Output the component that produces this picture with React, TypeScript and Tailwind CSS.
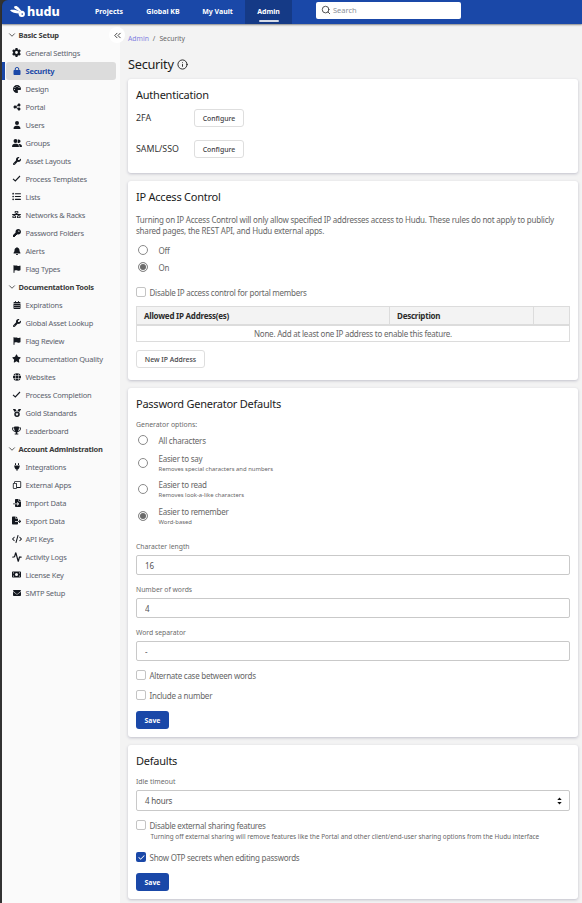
import type { ReactNode } from 'react'
import {
  FaGear, FaLock, FaPalette, FaShareNodes, FaUser, FaUserGroup, FaWrench, FaCheck, FaListUl,
  FaKey, FaBell, FaFlag, FaCalendarDays, FaStar, FaGlobe, FaMedal, FaTrophy, FaPlug, FaNetworkWired,
  FaFileImport, FaFileExport, FaCode, FaMoneyBill, FaEnvelope,
} from 'react-icons/fa6'
import { BiDevices } from 'react-icons/bi'
import { Activity, ChevronDown, ChevronsLeft, Info, Search } from 'lucide-react'
import type { IconType } from 'react-icons'

type NavItem = { label: string; icon: IconType; active?: boolean; size?: number }

function PulseIcon({ size, className }: { size?: string | number; className?: string }) {
  return <Activity size={size} strokeWidth={3} className={className} />
}

function CheckIcon({ size, className }: { size?: string | number; className?: string }) {
  return (
    <svg width={size} height={size} viewBox="0 0 9 9" fill="none" stroke="currentColor" strokeWidth="1.1" className={className}>
      <path d="M1 4.800 3.300 7 8 2" />
    </svg>
  )
}

const sections: { title: string; items: NavItem[] }[] = [
  {
    title: 'Basic Setup',
    items: [
      { label: 'General Settings', icon: FaGear },
      { label: 'Security', icon: FaLock, active: true, size: 8 },
      { label: 'Design', icon: FaPalette, size: 8 },
      { label: 'Portal', icon: FaShareNodes, size: 8 },
      { label: 'Users', icon: FaUser, size: 8 },
      { label: 'Groups', icon: FaUserGroup, size: 10 },
      { label: 'Asset Layouts', icon: FaWrench, size: 8 },
      { label: 'Process Templates', icon: CheckIcon },
      { label: 'Lists', icon: FaListUl },
      { label: 'Networks & Racks', icon: FaNetworkWired },
      { label: 'Password Folders', icon: FaKey, size: 8 },
      { label: 'Alerts', icon: FaBell, size: 8 },
      { label: 'Flag Types', icon: FaFlag, size: 8 },
    ],
  },
  {
    title: 'Documentation Tools',
    items: [
      { label: 'Expirations', icon: FaCalendarDays, size: 8 },
      { label: 'Global Asset Lookup', icon: FaWrench, size: 8 },
      { label: 'Flag Review', icon: FaFlag, size: 8 },
      { label: 'Documentation Quality', icon: FaStar },
      { label: 'Websites', icon: FaGlobe, size: 8 },
      { label: 'Process Completion', icon: CheckIcon },
      { label: 'Gold Standards', icon: FaMedal, size: 8 },
      { label: 'Leaderboard', icon: FaTrophy },
    ],
  },
  {
    title: 'Account Administration',
    items: [
      { label: 'Integrations', icon: FaPlug, size: 8 },
      { label: 'External Apps', icon: BiDevices, size: 10 },
      { label: 'Import Data', icon: FaFileImport, size: 8 },
      { label: 'Export Data', icon: FaFileExport },
      { label: 'API Keys', icon: FaCode, size: 10 },
      { label: 'Activity Logs', icon: PulseIcon, size: 10 },
      { label: 'License Key', icon: FaMoneyBill },
      { label: 'SMTP Setup', icon: FaEnvelope, size: 8 },
    ],
  },
]

function Logo() {
  return (
    <div className="flex w-[78px] items-center pl-2">
      <svg width="16" height="14" viewBox="0 0 16 14" fill="white">
        <path d="M4 1.700C5.200.6 7.300.8 8.600 2.600L11.500 6 9.600 6.600C7.500 4.400 4 4.200 4 1.700Z" />
        <path d="M0 5.200C2.500 4.400 6.500 5 10 6.600L8.800 8.400C5.500 8.300 1.800 7.500 0 5.200Z" />
        <path d="M12.100 5.700a3.200 3.200 0 1 1-3.500 3.800c-.3-2 1.300-3.800 3.500-3.800Zm.1 2.600a.8.800 0 1 0 0 1.600.8.800 0 0 0 0-1.600Z" />
      </svg>
      <span className="ml-[1px] text-[12.5px] leading-none font-extrabold text-white">hudu</span>
    </div>
  )
}

function Header() {
  return (
    <header className="relative z-10 flex h-6 items-stretch rounded-tl-md bg-[#1a48a8] font-bold text-white shadow-[0_1px_2px_rgba(0,0,0,0.45)]">
      <Logo />
      <nav className="flex text-[7px]">
        <a className="flex w-[58px] items-center justify-center">Projects</a>
        <a className="flex w-[50px] items-center justify-center">Global KB</a>
        <a className="flex w-[59px] items-center justify-center">My Vault</a>
        <a className="relative -ml-[2px] flex w-[47px] items-center justify-center bg-[#153a86]">
          Admin
          <span className="absolute bottom-[2px] left-[14px] h-[2px] w-5 rounded bg-[#d5dbe8]" />
        </a>
      </nav>
      <div className="mt-[2px] ml-6 flex h-[17px] w-[145px] items-center rounded-[2px] bg-white pl-[5px] font-normal">
        <Search size={10} strokeWidth={2} className="-mt-[1px] text-[#333]" />
        <span className="mt-[1px] ml-[2px] text-[7.5px] text-[#8a8f98]">Search</span>
      </div>
    </header>
  )
}

function Sidebar() {
  return (
    <aside className="relative w-[118px] shrink-0 bg-[#fafafa] pt-[2px]">
      <button className="absolute top-[3px] left-[107px] z-10 flex h-4 w-4 items-center justify-center rounded-full bg-white">
        <ChevronsLeft size={11} strokeWidth={2} className="text-[#333]" />
      </button>
      {sections.map((section) => (
        <div key={section.title}>
          <div className="flex h-[18px] items-center pl-[5px] text-[7.5px] font-bold tracking-[-0.22px] whitespace-nowrap text-[#3a3a3a]">
            <ChevronDown size={10} strokeWidth={2} className="mr-[1.5px]" />
            <span className="mt-[1px]">{section.title}</span>
          </div>
          {section.items.map((item) => (
            <div key={item.label} className="flex h-[18px] items-stretch">
              <span className={item.active ? 'w-[3px] bg-[#1a48a8]' : 'w-[3px]'} />
              <a
                className={
                  item.active
                    ? 'ml-[1px] flex w-[110px] items-center rounded-[3px] bg-[#dcdcdc] pl-[5px] font-bold text-[#1a48a8]'
                    : 'ml-[1px] flex w-[110px] items-center pl-[5px] text-[#5b616c]'
                }
              >
                <span className={item.active ? '-mt-[1px] flex w-[11px] justify-center' : '-mt-[1px] flex w-[11px] justify-center text-[#14181f]'}>
                  <item.icon size={item.size ?? 9} className="shrink-0" />
                </span>
                <span className="mt-[1px] ml-[3.5px] text-[7.5px] tracking-[-0.22px] whitespace-nowrap">{item.label}</span>
              </a>
            </div>
          ))}
        </div>
      ))}
    </aside>
  )
}

function Card({ title, className, children }: { title: string; className: string; children: ReactNode }) {
  return (
    <section className={`rounded-[3px] bg-white px-2 pt-2 shadow-[0_1px_3px_rgba(60,60,100,0.28)] ${className}`}>
      <h2 className="h-4 text-[11px] leading-4 tracking-[-0.24px] text-[#1c1c1c]">{title}</h2>
      {children}
    </section>
  )
}

function Button({ children, className = '' }: { children: ReactNode; className?: string }) {
  return (
    <button className={`flex h-[18px] items-center justify-center rounded-[3px] border border-[#dedede] bg-white pt-[1.5px] text-[6.9px] font-medium text-[#3f3f46] ${className}`}>
      {children}
    </button>
  )
}

function SaveButton({ className }: { className: string }) {
  return (
    <button className={`flex h-[18px] w-[33px] items-center justify-center rounded-[3px] bg-[#1a48a8] pt-[1.5px] text-[6.8px] font-bold text-white ${className}`}>
      Save
    </button>
  )
}

function Radio({ name, label, hint, checked, className }: { name: string; label: string; hint?: string; checked?: boolean; className: string }) {
  return (
    <label className={`flex items-center pl-[2px] text-[#666] ${className}`}>
      <input
        type="radio"
        name={name}
        defaultChecked={checked}
        className="h-[10px] w-[10px] shrink-0 appearance-none rounded-full border border-[#8a8a8a] bg-white checked:bg-[#6b6b6b] checked:shadow-[inset_0_0_0_1px_white]"
      />
      <span className="relative top-[0.5px] ml-[10.5px] flex flex-col">
        <span className="text-[8px] leading-[11px] tracking-[-0.24px]">{label}</span>
        {hint && <span className="relative top-[0.5px] text-[5.9px] leading-[11px]">{hint}</span>}
      </span>
    </label>
  )
}

function Checkbox({ label, checked, className }: { label: string; checked?: boolean; className: string }) {
  return (
    <label className={`flex h-[10px] items-center text-[#666] ${className}`}>
      <span
        className={
          checked
            ? 'flex h-[10px] w-[10px] items-center justify-center rounded-[2px] bg-[#1a48a8] text-white'
            : 'h-[10px] w-[10px] rounded-[2px] border border-[#c4c4c4] bg-white'
        }
      >
        {checked && <FaCheck size={7} />}
      </span>
      <span className="relative top-[1px] ml-[3.5px] text-[8px] leading-[10px] tracking-[-0.25px]">{label}</span>
    </label>
  )
}

function Field({ label, value, className }: { label: string; value: string; className: string }) {
  return (
    <label className={`block ${className}`}>
      <span className="relative top-[0.5px] block text-[6.8px] leading-[10px] text-[#6b6b6b]">{label}</span>
      <input
        defaultValue={value}
        className="mt-1 block h-5 w-full rounded-[2px] border border-[#c9c9c9] bg-white px-2 text-[8px] tracking-[-0.2px] text-[#555]"
      />
    </label>
  )
}

export default function App() {
  return (
    <div className="h-[903px] w-[582px] overflow-hidden bg-[#333] pl-[2px] font-['Noto_Sans','Open_Sans',sans-serif]">
      <Header />
      <div className="flex h-[879px]">
        <Sidebar />
        <main className="min-w-0 flex-1 bg-[#f3f3f3] pr-1 pl-2">
          <div className="mt-[9px] flex h-3 items-center text-[6.8px] text-[#666]">
            <span className="text-[#7f7fe0]">Admin</span>
            <span className="mx-[4px]">/</span>
            <span>Security</span>
          </div>
          <h1 className="mt-[11px] flex h-4 items-center text-[12.8px] leading-4 tracking-[-0.3px] text-[#1c1c1c]">
            Security
            <Info size={11} strokeWidth={2} className="mt-[1px] ml-[3px]" />
          </h1>

          <Card title="Authentication" className="mt-[7px] h-[94px]">
            <div className="mt-[6px] flex h-[18px] items-center text-[8.8px] text-[#333]">
              <span className="w-[58px] pt-[2px]">2FA</span>
              <Button className="w-[50px]">Configure</Button>
            </div>
            <div className="mt-[13px] flex h-[18px] items-center text-[8.8px] text-[#333]">
              <span className="w-[58px] pt-[2px]">SAML/SSO</span>
              <Button className="w-[50px]">Configure</Button>
            </div>
          </Card>

          <Card title="IP Access Control" className="mt-2 h-[199px]">
            <p className="relative top-[0.5px] mt-2 text-[8px] leading-[11px] tracking-[-0.21px] whitespace-nowrap text-[#666]">
              Turning on IP Access Control will only allow specified IP addresses access to Hudu. These rules do not apply to publicly
              <br />
              shared pages, the REST API, and Hudu external apps.
            </p>
            <Radio name="ip" label="Off" className="mt-[6px] h-[17px]" />
            <Radio name="ip" label="On" checked className="h-[17px]" />
            <Checkbox label="Disable IP access control for portal members" className="mt-3" />
            <table className="mt-[9px] w-full table-fixed border-collapse text-[8px] tracking-[-0.23px] text-[#666]">
              <thead>
                <tr className="h-[18px] border-b-2 border-[#dcdcdc] bg-[#f3f3f3] text-left text-[#2b2b2b]">
                  <th className="w-[253px] border border-b-2 border-[#dcdcdc] px-[7px] pt-[1px] leading-[10px]">Allowed IP Address(es)</th>
                  <th className="w-[144px] border border-b-2 border-[#dcdcdc] px-[7px] pt-[1px] leading-[10px]">Description</th>
                  <th className="border border-b-2 border-[#dcdcdc]" />
                </tr>
              </thead>
              <tbody>
                <tr className="h-[17px]">
                  <td colSpan={3} className="border border-[#dcdcdc] pt-[1px] text-center leading-[10px]">
                    None. Add at least one IP address to enable this feature.
                  </td>
                </tr>
              </tbody>
            </table>
            <Button className="mt-2 w-[69px]">New IP Address</Button>
          </Card>

          <Card title="Password Generator Defaults" className="mt-2 h-[349px]">
            <p className="mt-2 text-[6.9px] leading-[10px] text-[#6b6b6b]">Generator options:</p>
            <Radio name="generator" label="All characters" className="mt-1 h-3" />
            <Radio name="generator" label="Easier to say" hint="Removes special characters and numbers" className="mt-[6px] h-[22px]" />
            <Radio name="generator" label="Easier to read" hint="Removes look-a-like characters" className="mt-1 h-[22px]" />
            <Radio name="generator" label="Easier to remember" hint="Word-based" checked className="mt-[5px] h-[22px]" />
            <Field label="Character length" value="16" className="mt-[14px]" />
            <Field label="Number of words" value="4" className="mt-[9px]" />
            <Field label="Word separator" value="-" className="mt-[9px]" />
            <Checkbox label="Alternate case between words" className="mt-[9px]" />
            <Checkbox label="Include a number" className="mt-[10px]" />
            <SaveButton className="mt-[11px]" />
          </Card>

          <Card title="Defaults" className="mt-2 h-[154px]">
            <p className="mt-2 text-[6.9px] leading-[10px] text-[#6b6b6b]">Idle timeout</p>
            <div className="mt-[3px] flex h-[21px] items-center justify-between rounded-[2px] border border-[#c9c9c9] pr-[7px] pl-2 text-[8px] tracking-[-0.2px] text-[#555]">
              <span className="pt-[1px]">4 hours</span>
              <svg width="5" height="8" viewBox="0 0 5 8" fill="#111">
                <path d="M2.500 0.500 4.700 3H.3ZM2.500 7.500.3 5h4.400Z" />
              </svg>
            </div>
            <Checkbox label="Disable external sharing features" className="mt-[9px]" />
            <p className="mt-[2px] pl-[14.5px] text-[6.37px] leading-[9px] whitespace-nowrap text-[#666]">
              Turning off external sharing will remove features like the Portal and other client/end-user sharing options from the Hudu interface
            </p>
            <Checkbox label="Show OTP secrets when editing passwords" checked className="mt-[11px]" />
            <SaveButton className="mt-[11px]" />
          </Card>
        </main>
      </div>
    </div>
  )
}
